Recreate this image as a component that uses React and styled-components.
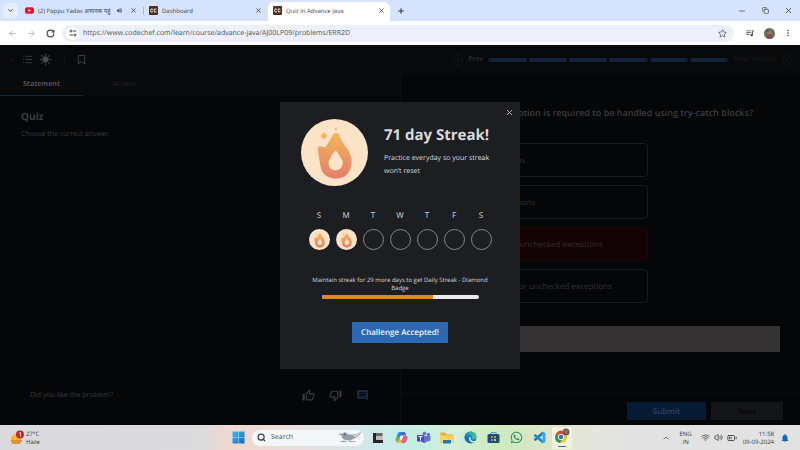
import React from "react";
import styled, { createGlobalStyle } from "styled-components";
import { ChevronDown, ChevronUp, X, Plus, Minus, ArrowLeft, ArrowRight, RotateCw, Star, Copy, Search, List, Wifi, Volume2, BatteryMedium, Bookmark } from "lucide-react";
import { MdOutlineThumbUp, MdOutlineThumbDown, MdComment, MdQueueMusic, MdMoreVert, MdNotifications, MdVolumeUp, MdSunny } from "react-icons/md";
import { FaWhatsapp } from "react-icons/fa";

const Global = createGlobalStyle`
  * { box-sizing: border-box; }
  body { margin: 0; font-family: "Open Sans", "Noto Sans", sans-serif; font-size: 8px; text-rendering: geometricPrecision; }
  button, input { font: inherit; color: inherit; border: 0; background: none; padding: 0; text-rendering: inherit; }
  svg { display: block; flex: none; }
  h1, h2, p { margin: 0; }
`;

const Screen = styled.div`
  min-height: 100vh;
  display: flex;
  flex-direction: column;
  background: #050608;
`;

/* Browser */
const TabStrip = styled.header`
  height: 21px;
  display: flex;
  align-items: stretch;
  background: #d5e3fd;
  color: #30343b;
`;
const IconButton = styled.button`
  display: flex;
  align-items: center;
  justify-content: center;
  flex: none;
  width: ${(p) => p.$w || 16}px;
  height: ${(p) => p.$h || 16}px;
  border-radius: ${(p) => (p.$round ? "5px" : 0)};
  background: ${(p) => p.$bg || "none"};
  color: ${(p) => p.$color || "inherit"};
`;
const TabSearch = styled.div`
  width: 20px;
  padding: 3px 3px 0;
`;
const Tab = styled.div`
  flex: 0 1 ${(p) => p.$w}px;
  min-width: 0;
  display: flex;
  align-items: center;
  gap: 4px;
  padding: 0 4px 0 5px;
  margin-top: ${(p) => (p.$active ? 2 : 0)}px;
  padding-bottom: ${(p) => (p.$active ? 2 : 0)}px;
  border-radius: 6px 6px 0 0;
  background: ${(p) => (p.$active ? "#fff" : "none")};
  font-size: 6px;
  color: #3f4654;
`;
const TabTitle = styled.span`
  flex: 1;
  white-space: nowrap;
`;
const TabRule = styled.i`
  width: 1px;
  height: 8px;
  align-self: center;
  background: #a9b9d6;
`;
const WindowButtons = styled.div`
  margin-left: auto;
  display: flex;
  align-items: center;
  gap: 7px;
  padding-right: 4px;
`;
const Toolbar = styled.nav`
  height: 24px;
  display: flex;
  align-items: center;
  gap: 3px;
  padding: 0 4px;
  background: #fff;
  color: #444850;
`;
const Address = styled.label`
  flex: 1;
  height: 17px;
  display: flex;
  align-items: center;
  gap: 4px;
  margin: 0 5px 0 1px;
  padding: 0 7px 0 4px;
  border-radius: 9px;
  background: #edf0fa;
`;
const AddressInput = styled.input`
  flex: 1;
  min-width: 0;
  outline: 0;
  font-size: 7px;
  color: #50535a;
`;
const SiteInfo = styled.span`
  width: 13px;
  height: 13px;
  border-radius: 50%;
  background: #fff;
  display: grid;
  place-items: center;
`;

/* Lesson page */
const Page = styled.main`
  position: relative;
  flex: 1;
  display: flex;
  flex-direction: column;
  background: #050608;
  color: #3a3c40;
`;
const LessonBar = styled.div`
  height: 29px;
  display: flex;
  align-items: center;
  padding: 0 8px;
  background: #08090b;
`;
const LessonTools = styled.div`
  display: flex;
  align-items: center;
`;
const ToolRule = styled.i`
  width: 1px;
  height: 10px;
  margin: 0 10px;
  background: #0f1113;
`;
const ModuleNav = styled.div`
  margin-left: auto;
  display: flex;
  align-items: center;
  gap: 5px;
`;
const Ring = styled.button`
  width: 10px;
  height: 10px;
  border: 1px solid #10161f;
  border-radius: 50%;
  color: #1c2a3c;
  line-height: 6px;
`;
const NavText = styled.span`
  font-size: 7px;
  font-weight: 600;
  color: ${(p) => (p.$dim ? "#15171b" : "#2a2d31")};
`;
const Segments = styled.div`
  width: 240px;
  display: grid;
  grid-template-columns: repeat(6, 1fr);
  gap: 2px;
`;
const Segment = styled.i`
  height: 4px;
  border-radius: 2px;
  background: #12233b;
`;
const Split = styled.div`
  flex: 1;
  display: grid;
  grid-template-columns: 1fr 1fr;
`;
const Pane = styled.section`
  display: flex;
  flex-direction: column;
  min-width: 0;
  border-left: ${(p) => (p.$divided ? "1px solid #0c0d10" : "0")};
`;
const PaneTabs = styled.div`
  height: 22px;
  display: flex;
  background: #08090b;
`;
const PaneTab = styled.button`
  width: 83px;
  font-size: 7px;
  font-weight: ${(p) => (p.$on ? 700 : 400)};
  color: ${(p) => (p.$on ? "#505357" : "#222427")};
  border-bottom: 1px solid ${(p) => (p.$on ? "#15273e" : "transparent")};
`;
const Statement = styled.div`
  flex: 1;
  padding: 13px 21px;
`;
const Heading = styled.h2`
  font-size: 10px;
  line-height: 14px;
  font-weight: 700;
`;
const Body = styled.p`
  margin-top: 6px;
  font-size: 7px;
  line-height: 12px;
`;
const Feedback = styled.div`
  height: 48px;
  display: flex;
  align-items: center;
  gap: 13px;
  padding: 0 31px 12px 30px;
  border-top: 1px solid #090a0c;
  font-size: 7px;
`;
const Grow = styled.span`
  flex: 1;
`;
const Quiz = styled.div`
  flex: 1;
  padding: 32px 20px 0 19px;
`;
const Question = styled.h2`
  font-size: 9px;
  line-height: 14px;
  font-weight: 600;
  white-space: nowrap;
  text-align: right;
  padding-right: 27px;
`;
const Options = styled.div`
  display: grid;
  gap: 8px;
  margin-top: 23px;
  width: 228px;
`;
const Option = styled.button`
  height: 34px;
  padding-left: 30px;
  text-align: left;
  border: 1px solid ${(p) => (p.$wrong ? "#1c0608" : "#191b1f")};
  border-radius: 4px;
  background: ${(p) => (p.$wrong ? "#120304" : "none")};
  color: ${(p) => (p.$wrong ? "#3c2b2d" : "#303236")};
`;
const Notice = styled.div`
  height: 26px;
  margin-top: 23px;
  background: #353233;
`;
const Actions = styled.div`
  height: 32px;
  display: flex;
  justify-content: flex-end;
  gap: 5px;
  padding: 8px 17px 5px;
  border-top: 1px solid #0c0d10;
`;
const Action = styled.button`
  width: ${(p) => (p.$primary ? 79 : 72)}px;
  font-weight: 600;
  background: ${(p) => (p.$primary ? "#071a33" : "#141518")};
  color: ${(p) => (p.$primary ? "#2d4565" : "#060709")};
`;

/* Streak dialog */
const Overlay = styled.div`
  position: absolute;
  inset: 0;
  display: grid;
  place-items: center;
`;
const Dialog = styled.div`
  position: relative;
  width: 240px;
  padding: 17px 21px 26px;
  display: flex;
  flex-direction: column;
  align-items: center;
  background: #1d1e22;
  color: #d9dadc;
`;
const Close = styled.button`
  position: absolute;
  top: 6px;
  right: 6px;
`;
const Intro = styled.div`
  width: 100%;
  display: flex;
  gap: 16px;
`;
const Title = styled.h1`
  margin-top: 6px;
  font-size: 15px;
  line-height: 20px;
  font-weight: 700;
  white-space: nowrap;
`;
const Lead = styled.p`
  margin-top: 7px;
  font-size: 7px;
  line-height: 13px;
`;
const Week = styled.div`
  margin-top: 24px;
  display: grid;
  grid-template-columns: repeat(7, 27px);
  justify-items: center;
`;
const Day = styled.div`
  display: grid;
  justify-items: center;
  gap: 8px;
  line-height: 11px;
`;
const Empty = styled.i`
  width: 21px;
  height: 21px;
  border: 1px solid #85878b;
  border-radius: 50%;
`;
const Goal = styled.p`
  margin-top: 26px;
  width: 188px;
  text-align: center;
  font-size: 6px;
  line-height: 8px;
`;
const Meter = styled.div`
  margin-top: 3px;
  width: 157px;
  height: 4px;
  border-radius: 2px;
  overflow: hidden;
  background: #eae9ee;
`;
const MeterFill = styled.div`
  height: 100%;
  background: #e3861d;
`;
const Accept = styled.button`
  margin-top: 23px;
  width: 96px;
  height: 21px;
  border-radius: 1px;
  background: #2d68b3;
  color: #f0f4fa;
  font-weight: 600;
`;

/* Taskbar */
const Taskbar = styled.footer`
  height: 25px;
  display: grid;
  grid-template-columns: 1fr auto 1fr;
  align-items: center;
  color: #34363a;
  font-size: 6px;
  line-height: 8px;
  background: linear-gradient(90deg, #dadadc 0, #dbdbdd 25%, #f0d8ce 29%, #e9dedd 37%, #cfe9ec 47%, #c3efe1 52%, #d5efda 57%, #cdebbd 62%, #dce5c9 69%, #e6e5dc 74%, #e2e2e2 79%, #e2e2e2 100%);
`;
const Weather = styled.div`
  display: flex;
  gap: 2px;
  padding-left: 10px;
`;
const Apps = styled.div`
  display: flex;
  align-items: center;
  gap: 9px;
`;
const SearchBox = styled.label`
  width: 112px;
  height: 16px;
  display: flex;
  align-items: center;
  gap: 5px;
  padding: 0 2px 0 5px;
  margin: 0 -2px;
  border-radius: 8px;
  background: #f4f7fa;
`;
const SearchInput = styled.input`
  width: 48px;
  flex: 1;
  outline: 0;
  font-size: 7px;
  &::placeholder { color: #55585d; opacity: 1; }
`;
const AppButton = styled.button`
  width: 14px;
  height: 22px;
  display: grid;
  place-items: center;
`;
const ActiveApp = styled(AppButton)`
  width: 20px;
  margin: 0 -3px;
  background: #f1f2e2;
  border-radius: 2px;
`;
const Running = styled.i`
  width: 8px;
  height: 1px;
  background: #2878c8;
`;
const Tray = styled.div`
  display: flex;
  justify-content: flex-end;
  align-items: center;
  gap: 4px;
  padding-right: 10px;
`;
const TrayText = styled.span`
  text-align: ${(p) => p.$align || "right"};
  margin: 0 ${(p) => p.$gap || 0}px;
  white-space: nowrap;
`;

const Chef = () => (
  <svg width="9" height="9" viewBox="0 0 18 18"><rect width="18" height="18" rx="2" fill="#4b3022" /><path d="M8 6.500Q3 4 3 9t5 2.500M15 6.500Q10 4 10 9t5 2.500" fill="none" stroke="#f6eadf" strokeWidth="2" /></svg>
);
const YouTube = () => (
  <svg width="9" height="7" viewBox="0 0 18 13"><rect width="18" height="13" rx="4" fill="#e3122b" /><path d="M7 3.500v6l5-3z" fill="#fff" /></svg>
);
const Sliders = () => (
  <svg width="8" height="8" viewBox="0 0 16 16" fill="none" stroke="#444850" strokeWidth="2"><circle cx="4" cy="4" r="2" /><path d="M8 4h7M1 12h7" /><circle cx="12" cy="12" r="2" /></svg>
);
const Avatar = () => (
  <svg width="11" height="11" viewBox="0 0 22 22"><circle cx="11" cy="11" r="11" fill="#66714f" /><circle cx="11" cy="9" r="5" fill="#a06d6a" /><path d="M3 18q8-11 16 0-8 7-16 0" fill="#854d58" /><circle cx="7" cy="5" r="3" fill="#54663e" /></svg>
);
const Flame = ({ size, id }) => (
  <svg width={size} height={size} viewBox="63 55 202 202">
    <defs><linearGradient id={id} x1="0" y1="0" x2="0" y2="1"><stop stopColor="#f3b65c" /><stop offset="1" stopColor="#e47f68" /></linearGradient></defs>
    <circle cx="164" cy="156" r="101" fill="#fde4c9" />
    <path d="M160 101Q168 93 177 101Q185 123 204 147Q216 165 216 186Q212 233 168 235Q123 232 120 186L113 147Q113 135 124 138L137 140Q149 122 160 101Z" fill={`url(#${id})`} />
    <path d="M167 149Q174 156 182 170Q190 180 189 190Q185 209 167 210Q148 208 146 190Q146 178 154 168Q160 157 167 149Z" fill="#fde4c9" />
    <path d="M132 95l10 11-10 11-10-11z" fill="#f2b465" /><path d="M168 79l5 6-5 6-5-6z" fill="#e9c394" />
  </svg>
);
const WeatherIcon = () => (
  <svg width="14" height="16" viewBox="0 0 28 32"><circle cx="12" cy="18" r="10" fill="#f5b82f" /><path d="M3 22h20M5 26h15" stroke="#d9822c" strokeWidth="3" strokeLinecap="round" /><circle cx="20" cy="9" r="8" fill="#c42b2b" /><path d="M18 7l3-2v8" fill="none" stroke="#fff" strokeWidth="1.500" /></svg>
);
const WindowsIcon = () => (
  <svg width="13" height="13" viewBox="0 0 26 26"><defs><linearGradient id="win" x1="0" y1="0" x2="1" y2="1"><stop stopColor="#43baf0" /><stop offset="1" stopColor="#0869c8" /></linearGradient></defs><path d="M1 1h11.500v11.500H1zM13.500 1H25v11.500H13.500zM1 13.500h11.500V25H1zM13.500 13.500H25V25H13.500z" fill="url(#win)" /></svg>
);
const Bird = () => (
  <svg width="25" height="13" viewBox="0 0 50 26"><path d="M2 6l10-1q4-5 8 0 2 3 10 2 10 0 18-5-2 9-12 12-9 7-18 4Q9 16 9 9z" fill="#929caa" /><path d="M30 7q9 2 18-5-3 10-14 10z" fill="#c5ccd5" /><path d="M6 21h14M24 21h13M15 16l-3 7M25 17l3 6" stroke="#a7ada9" strokeWidth="2" /><circle cx="15" cy="7" r="1.500" fill="#374454" /></svg>
);
const TaskView = () => (
  <svg width="12" height="12" viewBox="0 0 24 24"><path d="M2 2h6v14h14v6H2z" fill="#252625" /><path d="M8 2h13v14H8z" fill="#b9bcba" /><path d="M8 2h13v6H8z" fill="#666967" /></svg>
);
const Copilot = () => (
  <svg width="13" height="13" viewBox="0 0 26 26"><path d="M9 2h8q3 0 4 4l1 3h-7l-4 5H3L5 6q1-4 4-4z" fill="#2591df" /><path d="M14 2h4q3 0 4 5l-7 2-2 4-2-6q0-5 3-5z" fill="#5b5fd0" /><path d="M2 12h8l2 9q-1 3-5 3-5-2-6-6 0-4 1-6z" fill="#55bc62" /><path d="M5 19l7-2 6 2-4 5H8q-3-1-3-5z" fill="#f1b53a" /><path d="M16 9h6q4 1 3 6l-3 7q-2 3-7 2-3 0-2-4z" fill="#e85d8b" /><path d="M11 9h6l-3 8H9z" fill="#e8f4f4" /></svg>
);
const Teams = () => (
  <svg width="14" height="13" viewBox="0 0 28 26"><circle cx="15" cy="5" r="4" fill="#7078d0" /><circle cx="23" cy="7" r="3" fill="#5059b8" /><path d="M9 10h12v9q-3 6-8 5-4-1-4-6zM21 10h6v7q-1 5-6 4z" fill="#6870ca" /><rect y="8" width="14" height="13" rx="1" fill="#444db4" /><path d="M3 11h8M7 11v8" stroke="#fff" strokeWidth="2" /></svg>
);
const Folder = () => (
  <svg width="14" height="12" viewBox="0 0 28 24"><path d="M1 1h9l4 4h13v16H1z" fill="#e9ad28" /><path d="M1 7h26v15H1z" fill="#fbd45a" /><path d="M6 16h16v7H6z" fill="#2676b5" /></svg>
);
const Edge = () => (
  <svg width="13" height="13" viewBox="0 0 26 26"><defs><linearGradient id="edge"><stop stopColor="#1788d4" /><stop offset="1" stopColor="#4acb78" /></linearGradient></defs><circle cx="13" cy="13" r="12" fill="#1672c3" /><path d="M1 13Q2 1 14 1q11 1 11 10 0 7-8 6-3-1-1-4 0-5-6-5-6 0-9 5z" fill="url(#edge)" /><path d="M10 12q-1 9 7 11 5 0 8-4-5 2-9 0-3-2-3-5 1-4-3-2z" fill="#d9efeb" /></svg>
);
const Store = () => (
  <svg width="13" height="13" viewBox="0 0 26 26"><path d="M8 7V3h10v4" fill="none" stroke="#4aa3d5" strokeWidth="2" /><rect x="1" y="6" width="24" height="18" rx="3" fill="#244b72" /><path d="M8 10h4v4H8z" fill="#ed6542" /><path d="M14 10h4v4h-4z" fill="#82bd4c" /><path d="M8 16h4v4H8z" fill="#42a7de" /><path d="M14 16h4v4h-4z" fill="#f2bf40" /></svg>
);
const VsCode = () => (
  <svg width="13" height="13" viewBox="0 0 26 26"><path d="M19 1l6 3v18l-6 3z" fill="#36a5ea" /><path d="M19 1v7L5 20l-3-2v-2z" fill="#1878bf" /><path d="M19 25v-7L5 6 2 8v2z" fill="#1489d2" /></svg>
);
const Chrome = () => (
  <svg width="16" height="16" viewBox="0 0 32 32"><circle cx="14" cy="18" r="12" fill="#f5c52c" /><path d="M4 11Q14-1 25 12l-11 1-4 8z" fill="#dd473b" /><path d="M4 11l6 10 5 3-3 6Q-2 27 4 11z" fill="#289b55" /><circle cx="14" cy="18" r="6" fill="#fff" /><circle cx="14" cy="18" r="4.500" fill="#2878d1" /><circle cx="24" cy="8" r="7" fill="#725b57" /><circle cx="24" cy="7" r="3" fill="#9c7770" /></svg>
);

const days = ["S", "M", "T", "W", "T", "F", "S"];
const options = ["Checked exceptions", "Unchecked exceptions", "Both checked and unchecked exceptions", "Neither checked nor unchecked exceptions"];

function Browser() {
  return (
    <>
      <TabStrip>
        <TabSearch><IconButton $w={15} $h={15} $round $bg="#e6eefe" aria-label="Search tabs"><ChevronDown size={7} strokeWidth={3} /></IconButton></TabSearch>
        <Tab $w={123}><YouTube /><TabTitle>(2) Pappu Yadav अचानक पहुं</TabTitle><MdVolumeUp size={7} /><IconButton $w={12} aria-label="Close tab"><X size={7} strokeWidth={3} /></IconButton></Tab>
        <TabRule />
        <Tab $w={124}><Chef /><TabTitle>Dashboard</TabTitle><IconButton $w={12} aria-label="Close tab"><X size={7} strokeWidth={3} /></IconButton></Tab>
        <Tab $w={122} $active><Chef /><TabTitle>Quiz in Advance Java</TabTitle><IconButton $w={10} aria-label="Close tab"><X size={7} strokeWidth={3} /></IconButton></Tab>
        <IconButton $w={21} $h={21} aria-label="New tab"><Plus size={8} strokeWidth={3} /></IconButton>
        <WindowButtons>
          <IconButton aria-label="Minimize"><Minus size={8} /></IconButton>
          <IconButton aria-label="Restore"><Copy size={7} /></IconButton>
          <IconButton aria-label="Close window"><X size={9} strokeWidth={2} /></IconButton>
        </WindowButtons>
      </TabStrip>
      <Toolbar>
        <IconButton $color="#a2a5aa" aria-label="Back"><ArrowLeft size={9} /></IconButton>
        <IconButton $color="#a2a5aa" aria-label="Forward"><ArrowRight size={9} /></IconButton>
        <IconButton aria-label="Reload"><RotateCw size={9} strokeWidth={3} /></IconButton>
        <Address><SiteInfo><Sliders /></SiteInfo><AddressInput aria-label="Address" defaultValue="https://www.codechef.com/learn/course/advance-java/AJ00LP09/problems/ERR2D" /><Star size={9} /></Address>
        <IconButton aria-label="Media"><MdQueueMusic size={10} /></IconButton>
        <IconButton aria-label="Profile"><Avatar /></IconButton>
        <IconButton aria-label="Menu"><MdMoreVert size={10} /></IconButton>
      </Toolbar>
    </>
  );
}

function StreakDialog() {
  return (
    <Overlay>
      <Dialog role="dialog" aria-labelledby="streak">
        <Close aria-label="Close"><X size={9} strokeWidth={2} /></Close>
        <Intro>
          <Flame size={67} id="flame" />
          <div><Title id="streak">71 day Streak!</Title><Lead>Practice everyday so your streak won’t reset</Lead></div>
        </Intro>
        <Week>{days.map((d, i) => <Day key={i}><span>{d}</span>{i < 2 ? <Flame size={21} id={`flame-${i}`} /> : <Empty />}</Day>)}</Week>
        <Goal>Maintain streak for 29 more days to get Daily Streak - Diamond Badge</Goal>
        <Meter role="progressbar" aria-valuenow={71}><MeterFill style={{ width: "71%" }} /></Meter>
        <Accept>Challenge Accepted!</Accept>
      </Dialog>
    </Overlay>
  );
}

export default function App() {
  return (
    <Screen>
      <Global />
      <Browser />
      <Page>
        <LessonBar>
          <LessonTools>
            <IconButton $w={10} $color="#1b1d20" aria-label="Back"><ArrowLeft size={8} /></IconButton>
            <IconButton $w={18} aria-label="Contents"><List size={11} /></IconButton>
            <IconButton $w={18} $color="#46484b" aria-label="Theme"><MdSunny size={13} /></IconButton>
            <ToolRule />
            <IconButton $w={12} $color="#46484b" aria-label="Bookmark"><Bookmark size={11} /></IconButton>
          </LessonTools>
          <ModuleNav><Ring aria-label="Previous">‹</Ring><NavText>Prev</NavText><Segments>{days.slice(1).map((_, i) => <Segment key={i} />)}</Segments><NavText $dim>Next module</NavText><Ring aria-label="Next">›</Ring></ModuleNav>
        </LessonBar>
        <Split>
          <Pane>
            <PaneTabs><PaneTab $on>Statement</PaneTab><PaneTab>AI Help</PaneTab></PaneTabs>
            <Statement><Heading>Quiz</Heading><Body>Choose the correct answer.</Body></Statement>
            <Feedback><span>Did you like the problem?</span><Grow /><IconButton $w={14} aria-label="Like"><MdOutlineThumbUp size={13} /></IconButton><IconButton $w={14} aria-label="Dislike"><MdOutlineThumbDown size={13} /></IconButton><IconButton $w={14} $color="#192b42" aria-label="Comment"><MdComment size={13} /></IconButton></Feedback>
          </Pane>
          <Pane $divided>
            <Quiz>
              <Question>Which type of exception is required to be handled using try-catch blocks?</Question>
              <Options>{options.map((o, i) => <Option key={o} $wrong={i === 2}>{o}</Option>)}</Options>
              <Notice />
            </Quiz>
            <Actions><Action $primary>Submit</Action><Action>Next</Action></Actions>
          </Pane>
        </Split>
        <StreakDialog />
      </Page>
      <Taskbar>
        <Weather><WeatherIcon /><span>27°C<br />Haze</span></Weather>
        <Apps>
          <AppButton aria-label="Start"><WindowsIcon /></AppButton>
          <SearchBox><Search size={9} strokeWidth={3} /><SearchInput aria-label="Search" placeholder="Search" /><Bird /></SearchBox>
          <AppButton aria-label="Task view"><TaskView /></AppButton>
          <AppButton aria-label="Copilot"><Copilot /></AppButton>
          <AppButton aria-label="Teams"><Teams /></AppButton>
          <AppButton aria-label="Files"><Folder /></AppButton>
          <AppButton aria-label="Edge"><Edge /></AppButton>
          <AppButton aria-label="Store"><Store /></AppButton>
          <AppButton aria-label="WhatsApp"><FaWhatsapp size={13} color="#278a59" /></AppButton>
          <AppButton aria-label="VS Code"><VsCode /></AppButton>
          <ActiveApp aria-label="Chrome"><Chrome /><Running /></ActiveApp>
        </Apps>
        <Tray>
          <ChevronUp size={8} strokeWidth={2} />
          <TrayText $align="center" $gap={5}>ENG<br />IN</TrayText>
          <Wifi size={9} /><Volume2 size={9} /><BatteryMedium size={10} />
          <TrayText $gap={2}>11:58<br />09-09-2024</TrayText>
          <MdNotifications size={10} color="#1768b4" />
        </Tray>
      </Taskbar>
    </Screen>
  );
}
